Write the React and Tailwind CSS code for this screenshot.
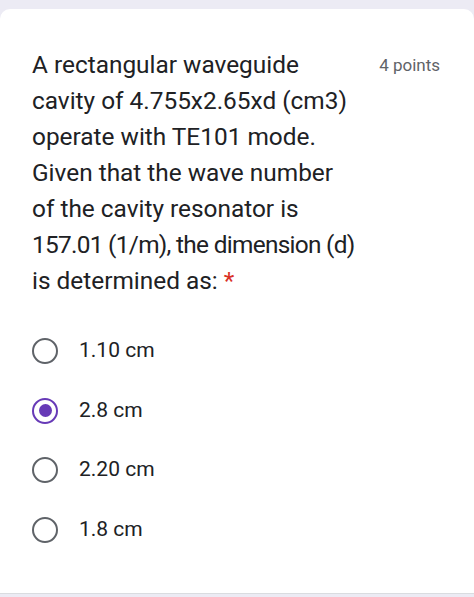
import React from 'react';

const options = ['1.10 cm', '2.8 cm', '2.20 cm', '1.8 cm'];

const lines = [
  'A rectangular waveguide',
  'cavity of 4.755x2.65xd (cm3)',
  'operate with TE101 mode.',
  'Given that the wave number',
  'of the cavity resonator is',
];

function Radio({ checked }) {
  if (checked) {
    return (
      <span className="w-[26px] h-[26px] rounded-full border-[2.5px] border-[#673ab7] flex items-center justify-center shrink-0">
        <span className="w-[13px] h-[13px] rounded-full bg-[#673ab7]" />
      </span>
    );
  }
  return <span className="w-[26px] h-[26px] rounded-full border-[2.5px] border-[#5f6368] shrink-0" />;
}

export default function App() {
  return (
    <div className="w-[474px] h-[597px] bg-[#ecebf4] pt-[9px] overflow-hidden" style={{ fontFamily: 'Roboto, "Noto Sans", sans-serif' }}>
      <div className="bg-white rounded-t-[10px] h-[585px] border-b border-[#dadce0] px-[32px] pt-[38px]">
        <div className="flex justify-between items-start">
          <div className="text-[24.4px] leading-[36px] text-[#202124] whitespace-nowrap">
            {lines.map((l) => (
              <div key={l}>{l}</div>
            ))}
            <div className="tracking-[-0.7px]">157.01 (1/m), the dimension (d)</div>
            <div>
              is determined as: <span className="text-[#d93025]">*</span>
            </div>
          </div>
          <span className="text-[17px] text-[#5f6368] mt-[6px] mr-[2px]">4 points</span>
        </div>
        <div className="mt-[39px] flex flex-col gap-[33.5px]">
          {options.map((o, i) => (
            <div key={o} className="flex items-center gap-[21px] h-[26px]">
              <Radio checked={i === 1} />
              <span className="text-[21px] text-[#202124]">{o}</span>
            </div>
          ))}
        </div>
      </div>
    </div>
  );
}
